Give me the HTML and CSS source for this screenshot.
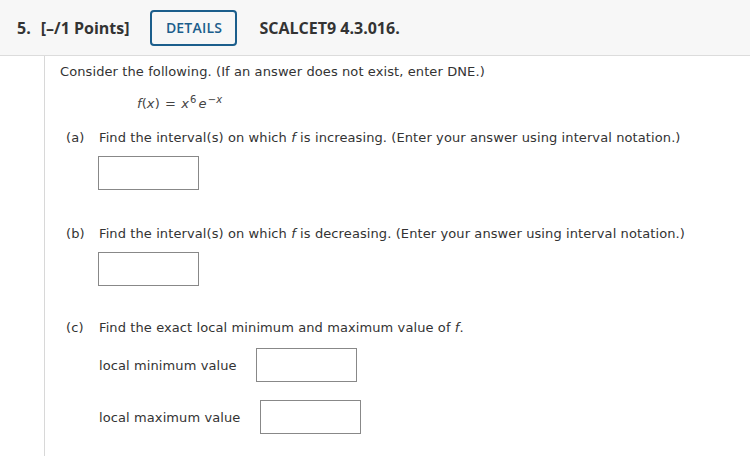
FILE: index.html
```html
<!DOCTYPE html>
<html>
<head>
<meta charset="utf-8">
<link rel="stylesheet" href="styles.css">
</head>
<body>
<div class="header">
  <span class="qnum">5.</span>
  <span class="points">[–/1 Points]</span>
  <span class="details">DETAILS</span>
  <span class="code">SCALCET9 4.3.016.</span>
</div>
<div class="content">
  <div class="main">
    <p class="intro">Consider the following. (If an answer does not exist, enter DNE.)</p>
    <p class="formula"><i>f</i>(<i>x</i>) <span class="eq">=</span> <i>x</i><sup>6</sup><i class="e">e</i><sup>−<i>x</i></sup></p>
    <div class="part parta">
      <div class="ptext"><span class="lbl">(a)</span><span>Find the interval(s) on which <i>f</i> is increasing. (Enter your answer using interval notation.)</span></div>
      <div class="box boxa"></div>
    </div>
    <div class="part partb">
      <div class="ptext"><span class="lbl">(b)</span><span>Find the interval(s) on which <i>f</i> is decreasing. (Enter your answer using interval notation.)</span></div>
      <div class="box boxb"></div>
    </div>
    <div class="part partc">
      <div class="ptext"><span class="lbl">(c)</span><span>Find the exact local minimum and maximum value of <i>f</i>.</span></div>
      <div class="row rowmin"><span>local minimum value</span><div class="box"></div></div>
      <div class="row rowmax"><span>local maximum value</span><div class="box"></div></div>
    </div>
  </div>
</div>
</body>
</html>
```
FILE: styles.css
```css
html, body { margin: 0; padding: 0; background: #fff; }
body { width: 750px; height: 456px; overflow: hidden; font-family: "DejaVu Sans", Verdana, sans-serif; color: #333; }
.header {
  height: 56px; box-sizing: border-box; background: #f7f7f7; border-bottom: 1px solid #dcdcdc;
  display: flex; align-items: center; padding-left: 17px;
  font-family: "Open Sans", sans-serif; font-weight: 700; font-size: 16px; color: #333;
}
.points { margin-left: 10px; }
.details {
  margin-left: 21px; width: 87px; height: 36px; box-sizing: border-box;
  border: 2px solid #1b5e8c; border-radius: 4px; color: #1b5e8c;
  display: flex; align-items: center; justify-content: center;
  font-size: 14px; font-weight: 600; letter-spacing: 0.2px;
}
.code { margin-left: 22px; }
.content { padding-left: 44px; }
.main { border-left: 1px solid #d8d8d8; padding-left: 15px; height: 400px; font-size: 13px; letter-spacing: 0.1px; }
p { margin: 0; }
.intro { padding-top: 8px; line-height: 16px; }
.formula { padding-left: 77px; padding-top: 16px; line-height: 16px; color: #444; }
.formula .eq { margin: 0 1px; }
.formula sup { font-size: 10px; vertical-align: 5px; line-height: 0; margin-left: 1px; }
.formula .e { margin-left: 2px; }
.ptext { display: flex; line-height: 16px; }
.lbl { width: 39px; padding-left: 6px; box-sizing: border-box; }
.box { width: 101px; height: 34px; box-sizing: border-box; border: 1px solid #888; background: #fff; }
.boxa, .boxb { margin-left: 38px; margin-top: 10px; }
.parta { margin-top: 18px; }
.partb { margin-top: 36px; }
.partc { margin-top: 34px; }
.row { display: flex; align-items: center; margin-left: 39px; }
.rowmin { margin-top: 12px; }
.rowmin span { width: 157px; }
.rowmax { margin-top: 18px; }
.rowmax span { width: 161px; }
```
